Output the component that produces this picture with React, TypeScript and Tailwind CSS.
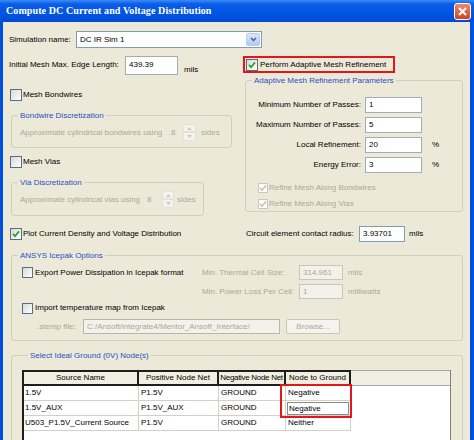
import React from "react";

function Cb({ checked = false, disabled = false, size = 12 }: { checked?: boolean; disabled?: boolean; size?: number }) {
  const sz = size === 12 ? "w-[12px] h-[12px]" : size === 11 ? "w-[11px] h-[11px]" : "w-[10px] h-[10px]";
  return (
    <span
      className={`inline-flex ${sz} shrink-0 items-center justify-center border ${
        disabled ? "border-[#CAC8BB] bg-white" : "border-[#566D8C] bg-linear-to-br from-[#D9D9D3] to-white"
      }`}
    >
      {checked && (
        <svg width="8" height="8" viewBox="0 0 8 8">
          <path d="M1 3.8 L3 6.2 L7 1.4" fill="none" stroke={disabled ? "#C8C6B8" : "#21A121"} strokeWidth="1.7" />
        </svg>
      )}
    </span>
  );
}

function Spinner({ w }: { w: string }) {
  return (
    <div className={`${w} h-[17px] flex flex-col`}>
      <div className="h-[8px] flex items-center justify-center bg-[#F4F3EE] border border-[#E4E2D8] rounded-t-[2px]">
        <svg width="5" height="3" viewBox="0 0 5 3"><path d="M0 3 L2.5 0 L5 3Z" fill="#CFCDC0" /></svg>
      </div>
      <div className="h-[9px] flex items-center justify-center bg-[#F4F3EE] border border-[#E4E2D8] rounded-b-[2px]">
        <svg width="5" height="3" viewBox="0 0 5 3"><path d="M0 0 L2.5 3 L5 0Z" fill="#CFCDC0" /></svg>
      </div>
    </div>
  );
}

function Legend({ children }: { children: React.ReactNode }) {
  return <legend className="ml-[6px] px-[2px] leading-[11px] text-[#2A4FC4]">{children}</legend>;
}

export default function App() {
  return (
    <div className="w-[474px] h-[440px] overflow-hidden bg-[#0050E0] flex flex-col font-['Liberation_Sans',Arial,sans-serif] text-[8px] text-black leading-none">
      {/* Title bar */}
      <div className="h-[22px] shrink-0 flex items-center justify-between pl-[6px] pr-[3px] bg-[linear-gradient(180deg,#3C8DF6_0%,#0A5DE8_18%,#0056E2_60%,#004AD4_100%)]">
        <span className="font-['Liberation_Serif',serif] font-bold text-[10px] text-white tracking-[0.1px]">
          Compute DC Current and Voltage Distribution
        </span>
        <div className="w-[17px] h-[17px] rounded-[3px] border border-white bg-linear-to-b from-[#EC8A6A] to-[#D0401E] flex items-center justify-center">
          <svg width="9" height="9" viewBox="0 0 9 9">
            <path d="M1 1 L8 8 M8 1 L1 8" stroke="white" strokeWidth="2" />
          </svg>
        </div>
      </div>

      {/* Body */}
      <div className="flex-1 ml-[3px] mr-[4px] bg-[#ECE9D8] pl-[6px] pt-[9px] flex flex-col">
        {/* Simulation name */}
        <div className="flex items-center h-[17px]">
          <span className="w-[67px]">Simulation name:</span>
          <div className="w-[186px] h-[17px] border border-[#7F9DB9] bg-white flex items-center justify-between pl-[3px] pr-[1px]">
            <span>DC IR Sim 1</span>
            <div className="w-[14px] h-[13px] rounded-[2px] bg-linear-to-b from-[#DCE6FD] to-[#B4C9F6] border border-[#B9CCF4] flex items-center justify-center">
              <svg width="7" height="5" viewBox="0 0 7 5"><path d="M1 1 L3.5 3.5 L6 1" fill="none" stroke="#4D6185" strokeWidth="1.5" /></svg>
            </div>
          </div>
        </div>

        {/* Two columns */}
        <div className="flex mt-[7px]">
          {/* Left column */}
          <div className="w-[224px] flex flex-col">
            <div className="flex items-center h-[20px]">
              <span className="w-[116px]">Initial Mesh Max. Edge Length:</span>
              <div className="w-[53px] h-[19px] border border-[#A5ACB5] bg-white flex items-center pl-[3px]">439.39</div>
              <span className="ml-[6px] self-end mb-[1px]">mils</span>
            </div>
            <div className="flex items-center h-[12px] mt-[14px] ml-[1px]">
              <Cb />
              <span className="ml-[1px]">Mesh Bondwires</span>
            </div>
            <fieldset className="mt-[9px] ml-[2px] w-[221px] border border-[#D0D0BF] rounded-[3px] pt-[3px] pb-[6px]">
              <Legend>Bondwire Discretization</Legend>
              <div className="flex items-center h-[17px] pl-[8px] text-[#ACA899]">
                <span className="w-[151px]">Approximate cylindrical bondwires using</span>
                <span className="w-[12px]">8</span>
                <Spinner w="w-[13px]" />
                <span className="ml-[5px]">sides</span>
              </div>
            </fieldset>
            <div className="flex items-center h-[12px] mt-[8px] ml-[1px]">
              <Cb />
              <span className="ml-[1px]">Mesh Vias</span>
            </div>
            <fieldset className="mt-[9px] ml-[2px] w-[193px] border border-[#D0D0BF] rounded-[3px] pt-[3px] pb-[7px]">
              <Legend>Via Discretization</Legend>
              <div className="flex items-center h-[17px] pl-[8px] text-[#ACA899]">
                <span className="w-[127px]">Approximate cylindrical vias using</span>
                <span className="w-[15px]">8</span>
                <Spinner w="w-[12px]" />
                <span className="ml-[3px]">sides</span>
              </div>
            </fieldset>
          </div>

          {/* Right column */}
          <div className="ml-[10px] w-[220px] flex flex-col">
            <div className="mt-[1px] h-[17px] w-[152px] border-2 border-[#E3161B] flex items-center pl-[1px]">
              <Cb checked />
              <span className="ml-[2px]">Perform Adaptive Mesh Refinement</span>
            </div>
            <fieldset className="mt-[2px] ml-[2px] w-[218px] border border-[#D0D0BF] rounded-[3px] pb-[1px]">
              <Legend>Adaptive Mesh Refinement Parameters</Legend>
              <div className="flex flex-col gap-[4px] pt-[11px]">
                {[
                  ["Minimum Number of Passes:", "1", ""],
                  ["Maximum Number of Passes:", "5", ""],
                  ["Local Refinement:", "20", "%"],
                  ["Energy Error:", "3", "%"],
                ].map(([l, v, u]) => (
                  <div key={l} className="flex items-center h-[16px]">
                    <span className="w-[115px] text-right">{l}</span>
                    <div className="ml-[4px] w-[57px] h-[16px] border border-[#A5ACB5] bg-white flex items-center pl-[3px]">{v}</div>
                    <span className="ml-[10px]">{u}</span>
                  </div>
                ))}
              </div>
              <div className="flex items-center h-[12px] mt-[9px] pl-[12px] text-[#ACA899]">
                <Cb checked disabled size={10} />
                <span className="ml-[1px]">Refine Mesh Along Bondwires</span>
              </div>
              <div className="flex items-center h-[12px] mt-[4px] pl-[12px] text-[#ACA899]">
                <Cb checked disabled size={10} />
                <span className="ml-[1px]">Refine Mesh Along Vias</span>
              </div>
            </fieldset>
          </div>
        </div>

        {/* Plot + circuit radius */}
        <div className="flex items-center h-[16px] mt-[10px]">
          <div className="w-[236px] flex items-center ml-[1px]">
            <Cb checked />
            <span className="ml-[1px]">Plot Current Density and Voltage Distribution</span>
          </div>
          <span className="w-[113px]">Circuit element contact radius:</span>
          <div className="w-[46px] h-[16px] border border-[#7F9DB9] bg-white flex items-center pl-[3px]">3.93701</div>
          <span className="ml-[4px]">mils</span>
        </div>

        {/* Icepak options */}
        <fieldset className="mt-[8px] ml-[2px] w-[452px] border border-[#D0D0BF] rounded-[3px] pt-[4px] pb-[6px]">
          <Legend>ANSYS Icepak Options</Legend>
          <div className="flex">
            <div className="w-[190px] pl-[10px]">
              <div className="flex items-center h-[15px]">
                <Cb size={11} />
                <span className="ml-[2px]">Export Power Dissipation in Icepak format</span>
              </div>
            </div>
            <div className="flex flex-col gap-[4px] text-[#ACA899]">
              <div className="flex items-center h-[15px]">
                <span className="w-[97px]">Min. Thermal Cell Size:</span>
                <div className="w-[44px] h-[15px] border border-[#C9C7BA] bg-[#F2F1EA] flex items-center pl-[3px]">314.961</div>
                <span className="ml-[5px]">mils</span>
              </div>
              <div className="flex items-center h-[15px]">
                <span className="w-[97px]">Min. Power Loss Per Cell:</span>
                <div className="w-[44px] h-[15px] border border-[#C9C7BA] bg-[#F2F1EA] flex items-center pl-[3px]">1</div>
                <span className="ml-[5px]">milliwatts</span>
              </div>
            </div>
          </div>
          <div className="flex items-center h-[12px] mt-[3px] pl-[10px]">
            <Cb size={11} />
            <span className="ml-[2px]">Import temperature map from Icepak</span>
          </div>
          <div className="flex items-center h-[15px] mt-[5px] pl-[25px] text-[#ACA899]">
            <span className="w-[46px]">.stemp file:</span>
            <div className="w-[197px] h-[15px] border border-[#B8B6AA] bg-[#F2F1EA] flex items-center pl-[3px] whitespace-nowrap overflow-hidden">
              C:/Ansoft/integrate4/Mentor_Ansoft_Interface/
            </div>
            <div className="ml-[6px] w-[54px] h-[15px] border border-[#C9C7BA] rounded-[2px] bg-[#F4F3EE] flex items-center justify-center">Browse...</div>
          </div>
        </fieldset>

        {/* Ideal ground */}
        <fieldset className="mt-[9px] ml-[2px] w-[452px] border border-[#D0D0BF] rounded-[3px] pt-[9px] pl-[10px] h-[150px]">
          <Legend>Select Ideal Ground (0V) Node(s)</Legend>
          <div className="relative w-[429px] h-[120px] bg-white border-l-2 border-[#1E1E1E] border-r border-r-[#808080]">
            <div className="flex h-[16px] bg-[#F1EFE2] whitespace-nowrap">
              <div className="w-[115px] border-y-2 border-r-2 border-[#1E1E1E] flex items-center justify-center">Source Name</div>
              <div className="w-[80px] border-y-2 border-r-2 border-[#1E1E1E] flex items-center justify-center">Positive Node Net</div>
              <div className="w-[67px] border-y-2 border-r-2 border-[#1E1E1E] flex items-center justify-center tracking-[-0.3px]">Negative Node Net</div>
              <div className="w-[65px] border-y-2 border-r-2 border-[#1E1E1E] flex items-center justify-center">Node to Ground</div>
              <div className="flex-1 border-y border-[#A7A6AA]"></div>
            </div>
            {[
              ["1.5V", "P1.5V", "GROUND", "Negative"],
              ["1.5V_AUX", "P1.5V_AUX", "GROUND", "Negative"],
              ["U503_P1.5V_Current Source", "P1.5V", "GROUND", "Neither"],
            ].map((r, i) => (
              <div key={i} className="flex h-[15px] whitespace-nowrap">
                <div className="w-[115px] border-r border-b border-[#D4D0C8] flex items-center pl-[1px]">{r[0]}</div>
                <div className="w-[80px] border-r border-b border-[#D4D0C8] flex items-center pl-[2px]">{r[1]}</div>
                <div className="w-[67px] border-r border-b border-[#D4D0C8] flex items-center pl-[2px]">{r[2]}</div>
                <div className="w-[65px] border-r border-b border-[#D4D0C8] flex items-center pl-[2px]">
                  {i === 1 ? (
                    <div className="w-[62px] h-[13px] -ml-[1px] mt-[1px] border border-[#8A8A8A] bg-white flex items-center pl-[1px]">Negative</div>
                  ) : (
                    r[3]
                  )}
                </div>
              </div>
            ))}
            <div className="absolute left-[256px] top-[14px] w-[72px] h-[34px] border-2 border-[#E3161B]"></div>
          </div>
        </fieldset>
      </div>
    </div>
  );
}
